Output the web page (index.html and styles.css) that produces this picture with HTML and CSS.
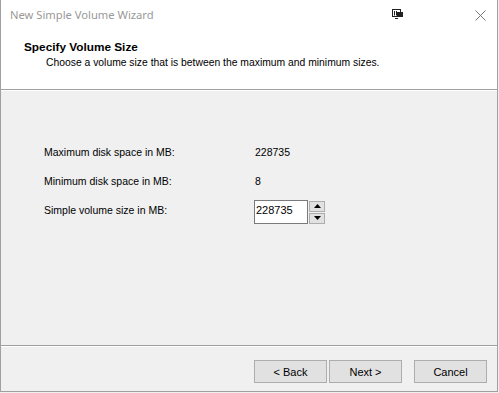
FILE: index.html
```html
<!DOCTYPE html>
<html>
<head>
<meta charset="utf-8">
<link rel="stylesheet" href="styles.css">
</head>
<body>
<div class="window">
  <div class="header">
    <div class="titlebar">
      <span class="title">New Simple Volume Wizard</span>
      <span class="tb-icon">
        <svg width="11" height="10" viewBox="0 0 11 10">
          <rect x="0.5" y="0.5" width="8" height="7" fill="none" stroke="#222" stroke-width="1"/>
          <line x1="2.5" y1="2" x2="2.5" y2="6.5" stroke="#222"/>
          <line x1="4.5" y1="2" x2="4.5" y2="6.5" stroke="#222"/>
          <rect x="5.5" y="3.5" width="5" height="4" fill="#fff" stroke="#222"/>
          <rect x="6" y="4" width="4" height="3" fill="#222"/>
          <line x1="3" y1="9.5" x2="6" y2="9.5" stroke="#222"/>
        </svg>
      </span>
      <span class="close">
        <svg width="11" height="11" viewBox="0 0 11 11">
          <path d="M0.5 0.5 L10.5 10.5 M10.5 0.5 L0.5 10.5" stroke="#777" stroke-width="1" fill="none"/>
        </svg>
      </span>
    </div>
    <div class="heading">Specify Volume Size</div>
    <div class="subheading">Choose a volume size that is between the maximum and minimum sizes.</div>
  </div>
  <div class="sep"></div>
  <div class="body">
    <div class="rows">
      <div class="label">Maximum disk space in MB:</div>
      <div class="value">228735</div>
      <div class="label">Minimum disk space in MB:</div>
      <div class="value">8</div>
      <div class="label">Simple volume size in MB:</div>
      <div class="value">
        <div class="spin">
          <div class="edit">228735</div>
          <div class="arrows">
            <div class="arrow"><svg width="7" height="4" viewBox="0 0 7 4"><path d="M3.5 0 L7 4 L0 4 Z" fill="#000"/></svg></div>
            <div class="arrow"><svg width="7" height="4" viewBox="0 0 7 4"><path d="M0 0 L7 0 L3.5 4 Z" fill="#000"/></svg></div>
          </div>
        </div>
      </div>
    </div>
  </div>
  <div class="sep"></div>
  <div class="footer">
    <button class="btn">&lt; Back</button>
    <button class="btn next">Next &gt;</button>
    <button class="btn cancel">Cancel</button>
  </div>
</div>
</body>
</html>
```

FILE: styles.css
```css
html, body {
  margin: 0;
  padding: 0;
  background: #f0f0f0;
}
body {
  width: 499px;
  height: 393px;
  overflow: hidden;
  font-family: "Liberation Sans", Arial, sans-serif;
  font-size: 10.5px;
  color: #000;
}
.window {
  width: 498px;
  height: 392px;
  box-sizing: border-box;
  border: 1px solid #a0a0a0;
  border-top: none;
  display: flex;
  flex-direction: column;
  background: #f0f0f0;
}
.header {
  background: #fff;
  height: 89px;
  display: flex;
  flex-direction: column;
}
.titlebar {
  height: 30px;
  display: flex;
  align-items: center;
  padding-left: 9px;
}
.title {
  font-family: "Segoe UI", "Noto Sans", sans-serif;
  font-size: 11.2px;
  color: #999;
  flex: 1;
  padding-bottom: 1px;
}
.tb-icon {
  display: flex;
  margin-right: 72px;
  margin-top: -3px;
}
.close {
  display: flex;
  margin-right: 11px;
  margin-top: 1px;
}
.heading {
  font-weight: bold;
  font-size: 11.8px;
  padding-left: 23px;
  margin-top: 11px;
  line-height: 13px;
}
.subheading {
  padding-left: 45px;
  font-size: 10.35px;
  line-height: 13px;
  margin-top: 2px;
}
.sep {
  height: 1px;
  background: #a0a0a0;
  border-bottom: 1px solid #fff;
}
.body {
  flex: 1;
  padding-top: 49px;
  padding-left: 43px;
}
.rows {
  display: grid;
  grid-template-columns: 210px auto;
  grid-auto-rows: 24px;
  row-gap: 5px;
  align-items: center;
}
.value {
  display: flex;
  align-items: center;
  padding-left: 1px;
}
.spin {
  display: flex;
  align-items: center;
  gap: 1px;
  margin-top: 4px;
  margin-left: -1px;
}
.edit {
  width: 51px;
  height: 22px;
  border: 1px solid #7a7a7a;
  background: #fff;
  line-height: 19px;
  padding-left: 1px;
  font-size: 11px;
  box-sizing: content-box;
}
.arrows {
  display: flex;
  flex-direction: column;
  gap: 1px;
}
.arrow {
  width: 14px;
  height: 9px;
  border: 1px solid #adadad;
  background: #e1e1e1;
  display: flex;
  align-items: center;
  justify-content: center;
}
.footer {
  height: 44px;
  display: flex;
  align-items: flex-start;
  justify-content: flex-end;
  padding-top: 13px;
  padding-right: 10px;
  box-sizing: border-box;
  gap: 2px;
}
.btn {
  width: 73px;
  height: 23px;
  margin: 0;
  padding: 0;
  border: 1px solid #adadad;
  background: #e1e1e1;
  font-family: "Liberation Sans", Arial, sans-serif;
  font-size: 11px;
  color: #000;
}
.cancel {
  margin-left: 10px;
}
```
